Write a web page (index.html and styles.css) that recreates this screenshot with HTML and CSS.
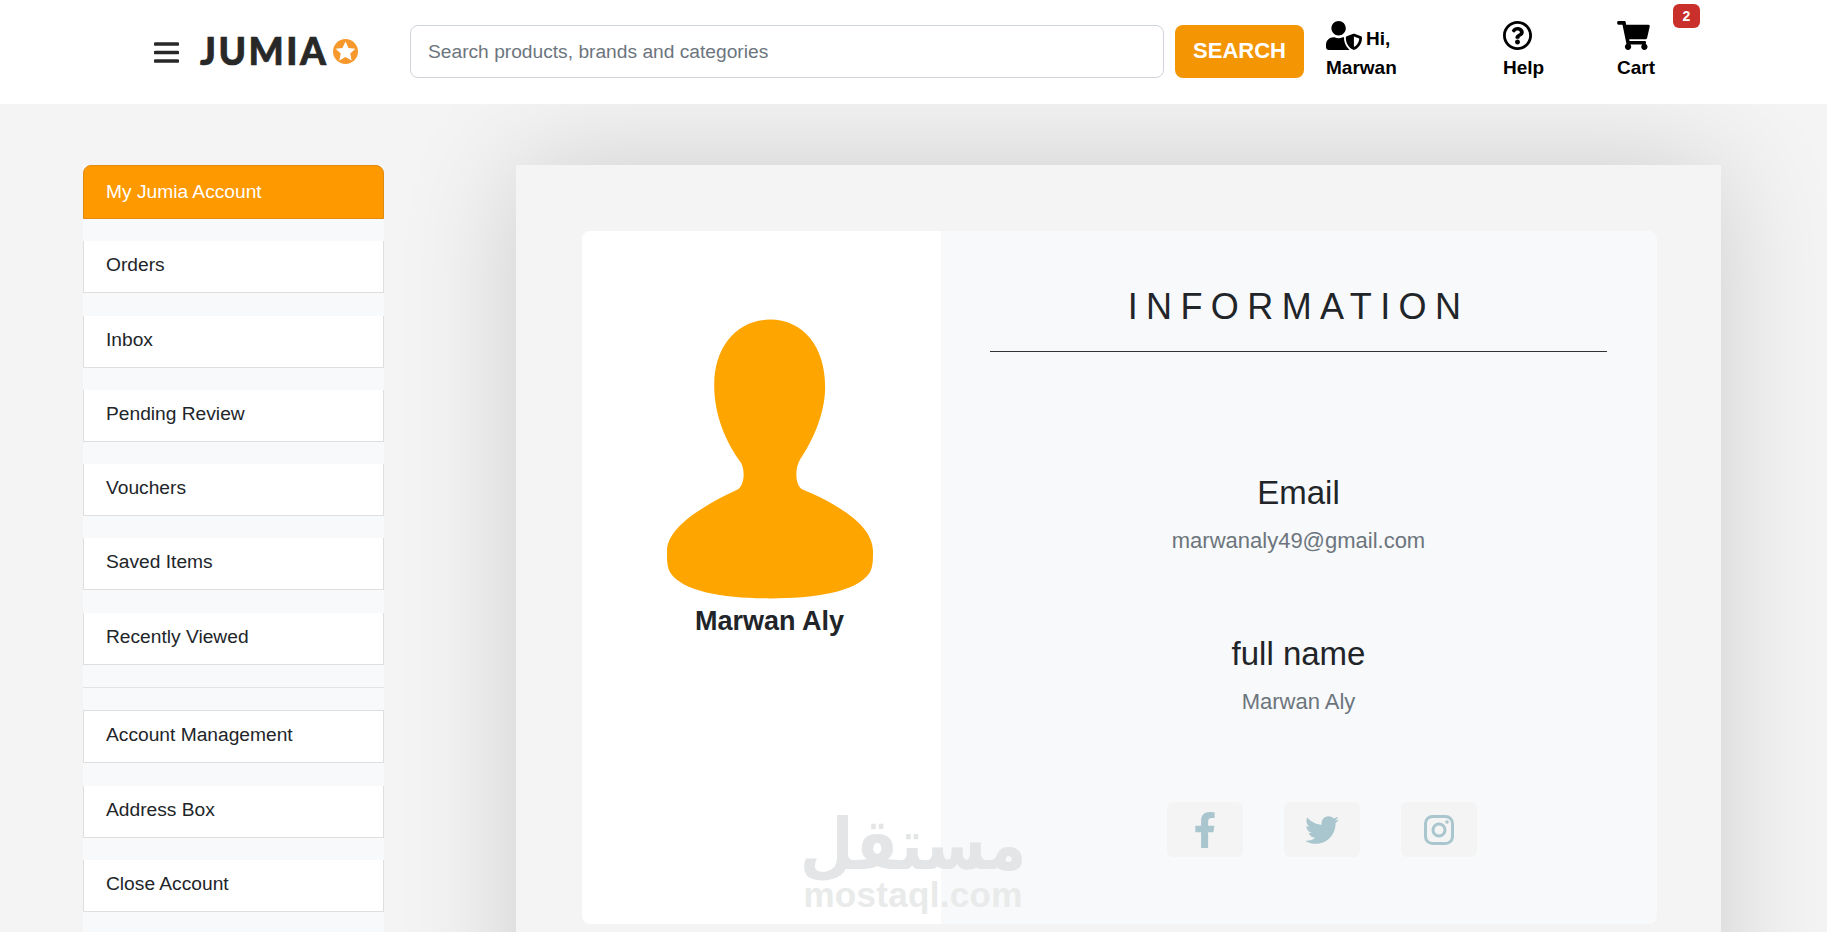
FILE: index.html
```html
<!DOCTYPE html>
<html>
<head>
    <meta charset="UTF-8">
    <title>My Jumia Account</title>
    <link rel="stylesheet" href="styles.css">
</head>

<body>
<header class="topbar">
    <svg class="burger" viewBox="0 0 25 21"><path d="M1.500 2h22M1.500 10.500h22M1.500 19h22" stroke="#282828" stroke-width="3.600" stroke-linecap="round"/></svg>
    <div class="logo">
        <span class="logo-text">JUMIA</span>
        <svg class="logo-star" viewBox="0 0 24 24"><circle cx="12" cy="12" r="12" fill="#f6982b"/><polygon points="12,2.500 14.900,8.600 21.500,9.400 16.600,14 17.900,20.600 12,17.300 6.100,20.600 7.400,14 2.500,9.400 9.100,8.600" fill="#fff"/></svg>
    </div>
    <input class="search-input" type="text" placeholder="Search products, brands and categories">
    <button class="search-button" type="button">SEARCH</button>
    <div class="account">
        <div class="account-top">
            <svg class="icon-user" viewBox="0 0 640 512"><path d="M622.3 271.1l-115.2-45c-4.100-1.600-12.600-3.700-22.200 0l-115.200 45c-10.700 4.200-17.700 14-17.700 24.900 0 111.600 68.700 188.800 132.900 213.900 9.600 3.700 18 1.600 22.200 0C558.400 489.900 640 420.500 640 296c0-10.900-7-20.700-17.700-24.900zM496 462.400V273.300l95.500 37.300c-5.600 87.100-60.900 135.400-95.500 151.800zM224 256c70.700 0 128-57.300 128-128S294.700 0 224 0 96 57.300 96 128s57.300 128 128 128zm96 40c0-2.500.8-4.800 1.100-7.200-2.500-.1-4.900-.8-7.500-.8h-16.700c-22.200 10.200-46.900 16-72.900 16s-50.600-5.800-72.900-16h-16.700C60.200 288 0 348.200 0 422.400V464c0 26.500 21.500 48 48 48h352c6.800 0 13.300-1.500 19.100-4-54-42.900-99.100-116.700-99.100-212z"/></svg>
            <span>Hi,</span>
        </div>
        <div class="account-name">Marwan</div>
    </div>
    <div class="nav-item nav-help">
        <svg class="icon-help" viewBox="8 8 496 496"><path d="M256 8C119.043 8 8 119.083 8 256c0 136.997 111.043 248 248 248s248-111.003 248-248C504 119.083 392.957 8 256 8zm0 448c-110.532 0-200-89.431-200-200 0-110.495 89.472-200 200-200 110.491 0 200 89.471 200 200 0 110.569-89.431 200-200 200zm107.244-255.200c0 67.052-72.421 68.084-72.421 92.863V300c0 6.627-5.373 12-12 12h-45.647c-6.627 0-12-5.373-12-12v-8.659c0-35.745 27.100-50.034 47.579-61.516 17.561-9.845 28.324-16.541 28.324-29.579 0-17.246-21.999-28.693-39.784-28.693-23.189 0-33.894 10.977-48.942 29.969-4.057 5.120-11.460 6.071-16.666 2.124l-27.824-21.098c-5.107-3.872-6.251-11.066-2.644-16.363C184.846 131.491 214.940 112 261.794 112c49.071 0 101.450 38.304 101.450 88.800zM298 368c0 23.159-18.841 42-42 42s-42-18.841-42-42 18.841-42 42-42 42 18.841 42 42z"/></svg>
        <span>Help</span>
    </div>
    <div class="nav-item nav-cart">
        <svg class="icon-cart" viewBox="0 0 576 512"><path d="M528.120 301.319l47.273-208C578.806 78.301 567.391 64 551.990 64H159.208l-9.166-44.810C147.758 8.021 137.930 0 126.529 0H24C10.745 0 0 10.745 0 24v16c0 13.255 10.745 24 24 24h69.883l70.248 343.435C147.325 417.100 136 435.222 136 456c0 30.928 25.072 56 56 56s56-25.072 56-56c0-15.674-6.447-29.835-16.824-40h209.647C430.447 426.165 424 440.326 424 456c0 30.928 25.072 56 56 56s56-25.072 56-56c0-22.172-12.888-41.332-31.579-50.405l5.517-24.276c3.413-15.018-8.002-29.319-23.403-29.319H218.117l-6.545-32h293.145c11.206 0 20.920-7.754 23.403-18.681z"/></svg>
        <span>Cart</span>
        <span class="badge">2</span>
    </div>
</header>

<div class="page">
    <aside class="sidebar">
        <a class="side-item active">My Jumia Account</a>
        <a class="side-item">Orders</a>
        <a class="side-item">Inbox</a>
        <a class="side-item">Pending Review</a>
        <a class="side-item">Vouchers</a>
        <a class="side-item">Saved Items</a>
        <a class="side-item">Recently Viewed</a>
        <hr class="side-line">
        <a class="side-item boxed">Account Management</a>
        <a class="side-item">Address Box</a>
        <a class="side-item">Close Account</a>
    </aside>

    <main class="panel">
        <div class="profile-card">
            <section class="profile-left">
                <svg class="avatar" viewBox="80 58 620 839"><path d="M390 58C490 58 556 140 556 260C556 340 520 420 480 480C465 505 465 550 485 568C560 600 700 665 700 755C700 785 700 800 690 820C650 880 520 897 390 897C260 897 130 880 90 820C80 800 80 785 80 755C80 670 230 600 295 568C315 550 315 505 300 485C260 430 222 350 222 255C222 140 290 58 390 58Z" fill="#ffa500"/></svg>
                <h4 class="profile-name">Marwan Aly</h4>
            </section>
            <section class="profile-right">
                <h2 class="info-title">INFORMATION</h2>
                <hr class="info-line">
                <div class="info-block">
                    <h3>Email</h3>
                    <p>marwanaly49@gmail.com</p>
                </div>
                <div class="info-block">
                    <h3>full name</h3>
                    <p>Marwan Aly</p>
                </div>
                <div class="socials">
                    <a class="social-box"><svg class="icon-fb" viewBox="22 0 276 512"><path d="M279.140 288l14.220-92.660h-88.910v-60.130c0-25.350 12.420-50.060 52.240-50.060h40.420V6.260S260.430 0 225.360 0c-73.220 0-121.080 44.380-121.080 124.720v70.620H22.890V288h81.390v224h100.170V288z"/></svg></a>
                    <a class="social-box"><svg class="icon-tw" viewBox="0 48 512 416"><path d="M459.370 151.716c.325 4.548.325 9.097.325 13.645 0 138.720-105.583 298.558-298.558 298.558-59.452 0-114.680-17.219-161.137-47.106 8.447.974 16.568 1.299 25.340 1.299 49.055 0 94.213-16.568 130.274-44.832-46.132-.975-84.792-31.188-98.112-72.772 6.498.974 12.995 1.624 19.818 1.624 9.421 0 18.843-1.300 27.614-3.573-48.081-9.747-84.143-51.980-84.143-102.985v-1.299c13.969 7.797 30.214 12.670 47.431 13.319-28.264-18.843-46.781-51.005-46.781-87.391 0-19.492 5.197-37.360 14.294-52.954 51.655 63.675 129.300 105.258 216.365 109.807-1.624-7.797-2.599-15.918-2.599-24.040 0-57.828 46.782-104.934 104.934-104.934 30.213 0 57.502 12.670 76.670 33.137 23.715-4.548 46.456-13.320 66.599-25.340-7.798 24.366-24.366 44.833-46.132 57.827 21.117-2.273 41.584-8.122 60.426-16.243-14.292 20.791-32.161 39.308-52.628 54.253z"/></svg></a>
                    <a class="social-box"><svg class="icon-ig" viewBox="0 0 30 30"><rect x="1.500" y="1.500" width="27" height="27" rx="7" fill="none" stroke="#a9c6ce" stroke-width="3"/><circle cx="15" cy="15" r="6" fill="none" stroke="#a9c6ce" stroke-width="3"/><circle cx="23" cy="7" r="1.800" fill="#a9c6ce"/></svg></a>
                </div>
            </section>
            <div class="watermark">
                <span class="watermark-ar">مستقل</span>
                <span class="watermark-en">mostaql.com</span>
            </div>
        </div>
    </main>
</div>
</body>
</html>
```
FILE: styles.css
```css
* {
    box-sizing: border-box;
}

html, body {
    height: 932px;
    overflow: hidden;
}

body {
    margin: 0;
    font-family: "Liberation Sans", Arial, sans-serif;
    background-color: #f4f4f4;
    color: #212529;
}

.topbar {
    position: relative;
    z-index: 5;
    height: 104px;
    padding-left: 154px;
    padding-bottom: 2px;
    background-color: #fff;
    display: flex;
    align-items: center;
}

.burger {
    width: 25px;
    height: 21px;
    margin-top: 3px;
}

.logo {
    display: flex;
    align-items: center;
    width: 158px;
    margin-left: 21px;
    margin-right: 52px;
}

.logo-text {
    font-family: "Lato", sans-serif;
    font-weight: 900;
    font-size: 37px;
    line-height: 36px;
    letter-spacing: 2.500px;
    -webkit-text-stroke: 0.7px #282828;
    color: #282828;
    width: 133px;
}

.logo-star {
    width: 25px;
    height: 25px;
}

.search-input {
    width: 754px;
    height: 53px;
    padding: 2px 17px 0;
    border: 1px solid #ced4da;
    border-radius: 8px;
    font-family: inherit;
    font-size: 19.200px;
    background-color: #fff;
}

.search-input::placeholder {
    color: #6c757d;
    opacity: 1;
}

.search-button {
    width: 129px;
    height: 53px;
    margin-left: 11px;
    border: none;
    border-radius: 8px;
    background-color: #f49503;
    color: #fff;
    font-family: inherit;
    font-weight: bold;
    font-size: 22px;
}

.account {
    width: 177px;
    margin-left: 22px;
    margin-bottom: 3px;
    font-weight: bold;
    font-size: 19px;
    color: #000;
}

.account-top {
    display: flex;
    align-items: flex-end;
    height: 29px;
}

.account-top span {
    margin-left: 4px;
    line-height: 22px;
}

.icon-user {
    width: 36px;
    height: 29px;
}

.account-name {
    margin-top: 7px;
    line-height: 22px;
}

.nav-item {
    position: relative;
    margin-bottom: 3px;
    display: flex;
    flex-direction: column;
    align-items: flex-start;
    font-weight: bold;
    font-size: 19px;
    color: #000;
}

.nav-item span {
    margin-top: 7px;
    line-height: 22px;
}

.nav-help {
    width: 114px;
}

.icon-help {
    width: 29px;
    height: 29px;
}

.icon-cart {
    width: 33px;
    height: 29px;
}

.nav-item .badge {
    position: absolute;
    top: -17px;
    left: 56px;
    width: 27px;
    height: 24px;
    margin: 0;
    border-radius: 6px;
    background-color: #c9302c;
    color: #fff;
    font-size: 14px;
    line-height: 24px;
    text-align: center;
}

.page {
    display: flex;
    align-items: flex-start;
    padding: 61px 0 0 83px;
}

.sidebar {
    width: 301px;
    height: 767px;
    background-color: #f8f9fa;
    display: flex;
    flex-direction: column;
    gap: 22.300px;
    flex-shrink: 0;
}

.side-item {
    display: block;
    height: 52px;
    padding-left: 22px;
    background-color: #fff;
    border: 1px solid #dfdfdf;
    border-top: none;
    font-size: 19.200px;
    line-height: 48.500px;
    color: #212529;
}

.side-item.active {
    height: 54px;
    background-color: #ff9900;
    border: 1px solid #e08a10;
    border-radius: 8px 8px 0 0;
    color: #fff;
    line-height: 52px;
}

.side-item.boxed {
    height: 53px;
    border-top: 1px solid #dfdfdf;
}

.side-line {
    width: 100%;
    height: 1px;
    margin: 0;
    border: none;
    background-color: #e3e3e3;
}

.panel {
    width: 1205px;
    height: 1000px;
    margin-left: 132px;
    padding: 66px 64px 0 66px;
    background-color: #f4f4f4;
    box-shadow: 0 0 110px rgba(0, 0, 0, 0.16);
    flex-shrink: 0;
}

.profile-card {
    position: relative;
    display: flex;
    height: 693px;
    border-radius: 8px;
    overflow: hidden;
    background-color: #f8f9fa;
}

.profile-left {
    width: 359px;
    padding: 88px 0 0 16px;
    background-color: #fff;
    display: flex;
    flex-direction: column;
    align-items: center;
}

.avatar {
    width: 206px;
    height: 280px;
}

.profile-name {
    margin: 5px 0 0;
    font-size: 27px;
    line-height: 34px;
    font-weight: bold;
}

.profile-right {
    flex: 1;
    padding: 54px 50px 0 49px;
    display: flex;
    flex-direction: column;
    align-items: center;
}

.info-title {
    margin: 0;
    font-size: 36px;
    line-height: 44px;
    font-weight: normal;
    letter-spacing: 8.400px;
}

.info-line {
    width: 100%;
    height: 1px;
    margin: 22px 0 0;
    border: none;
    background-color: #333;
}

.info-block {
    margin-top: 122px;
    text-align: center;
}

.info-block + .info-block {
    margin-top: 81px;
}

.info-block h3 {
    margin: 0;
    font-size: 33px;
    line-height: 38px;
    font-weight: normal;
}

.info-block p {
    margin: 16px 0 0;
    font-size: 22px;
    line-height: 26px;
    color: #6c757d;
}

.socials {
    display: flex;
    gap: 41px;
    margin-top: 87px;
    margin-left: 47px;
}

.social-box {
    width: 76px;
    height: 55px;
    display: flex;
    align-items: center;
    justify-content: center;
    border-radius: 6px;
    background-color: #f4f4f4;
    fill: #a9c6ce;
}

.icon-fb {
    width: 20px;
    height: 36px;
}

.icon-tw {
    width: 34px;
    height: 28px;
}

.icon-ig {
    width: 30px;
    height: 30px;
}

.watermark {
    position: absolute;
    left: 221px;
    top: 584px;
    width: 220px;
    display: flex;
    flex-direction: column;
    align-items: center;
    color: #e3e5e6;
    font-weight: bold;
}

.watermark-ar {
    font-family: "DejaVu Sans", sans-serif;
    font-size: 62px;
    line-height: 60px;
    transform: scaleY(1.150);
}

.watermark-en {
    margin-top: 5px;
    font-size: 35px;
    line-height: 30px;
    letter-spacing: 0.300px;
    color: #e9eaea;
}
```
